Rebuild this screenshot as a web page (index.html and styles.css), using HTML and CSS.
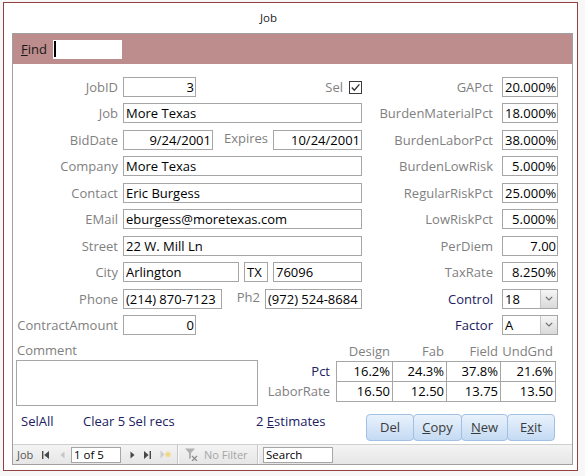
FILE: index.html
```html
<!DOCTYPE html>
<html>
<head>
<meta charset="utf-8">
<link rel="stylesheet" href="styles.css">
</head>
<body>
<div class="frame">
  <div class="title">Job</div>
  <div class="panel">
    <div class="band">
      <span class="find-label"><u>F</u>ind</span>
      <span class="find-box"><span class="caret"></span></span>
    </div>

    <div class="form">
      <div class="lbl">JobID</div>
      <div class="fld">
        <div class="box num w73">3</div>
        <div class="spacer"></div>
        <div class="lbl-in">Sel</div>
        <div class="check">
          <svg width="11" height="11" viewBox="0 0 11 11"><polyline points="1.8,5.6 4.3,8.2 9.4,2.4" fill="none" stroke="#333" stroke-width="1.4"/></svg>
        </div>
      </div>
      <div class="lbl r">GAPct</div>
      <div class="box num">20.000%</div>

      <div class="lbl">Job</div>
      <div class="box">More Texas</div>
      <div class="lbl r">BurdenMaterialPct</div>
      <div class="box num">18.000%</div>

      <div class="lbl">BidDate</div>
      <div class="fld">
        <div class="box num w90">9/24/2001</div>
        <div class="spacer"></div>
        <div class="lbl-in up">Expires</div>
        <div class="box num w89">10/24/2001</div>
      </div>
      <div class="lbl r">BurdenLaborPct</div>
      <div class="box num">38.000%</div>

      <div class="lbl">Company</div>
      <div class="box">More Texas</div>
      <div class="lbl r">BurdenLowRisk</div>
      <div class="box num">5.000%</div>

      <div class="lbl">Contact</div>
      <div class="box">Eric Burgess</div>
      <div class="lbl r">RegularRiskPct</div>
      <div class="box num">25.000%</div>

      <div class="lbl">EMail</div>
      <div class="box">eburgess@moretexas.com</div>
      <div class="lbl r">LowRiskPct</div>
      <div class="box num">5.000%</div>

      <div class="lbl">Street</div>
      <div class="box">22 W. Mill Ln</div>
      <div class="lbl r">PerDiem</div>
      <div class="box num">7.00</div>

      <div class="lbl">City</div>
      <div class="fld">
        <div class="box w116">Arlington</div>
        <div class="box w24 gap5">TX</div>
        <div class="box w89 gap5">76096</div>
      </div>
      <div class="lbl r">TaxRate</div>
      <div class="box num">8.250%</div>

      <div class="lbl">Phone</div>
      <div class="fld">
        <div class="box w99">(214) 870-7123</div>
        <div class="spacer"></div>
        <div class="lbl-in up">Ph2</div>
        <div class="box w97">(972) 524-8684</div>
      </div>
      <div class="lbl r navy">Control</div>
      <div class="box combo">
        <span class="cval">18</span>
        <span class="drop"><svg width="8" height="5" viewBox="0 0 8 5"><polyline points="0.8,0.8 4,4 7.2,0.8" fill="none" stroke="#6a6a6a" stroke-width="1.1"/></svg></span>
      </div>

      <div class="lbl">ContractAmount</div>
      <div class="fld">
        <div class="box num w73">0</div>
      </div>
      <div class="lbl r navy">Factor</div>
      <div class="box combo">
        <span class="cval">A</span>
        <span class="drop"><svg width="8" height="5" viewBox="0 0 8 5"><polyline points="0.8,0.8 4,4 7.2,0.8" fill="none" stroke="#6a6a6a" stroke-width="1.1"/></svg></span>
      </div>
    </div>

    <div class="lower">
      <div class="comment">
        <div class="comment-lbl">Comment</div>
        <div class="comment-box"></div>
      </div>
      <div class="stat-labels">
        <span class="navy">Pct</span>
        <span>LaborRate</span>
      </div>
      <div class="stat-data">
        <div class="stat-heads">
          <span>Design</span><span>Fab</span><span>Field</span><span>UndGnd</span>
        </div>
        <div class="stat-cells">
          <span>16.2%</span><span>24.3%</span><span>37.8%</span><span>21.6%</span>
          <span>16.50</span><span>12.50</span><span>13.75</span><span>13.50</span>
        </div>
      </div>
    </div>

    <div class="actions">
      <span class="link">SelAll</span>
      <span class="link">Clear 5 Sel recs</span>
      <span class="link">2 <u>E</u>stimates</span>
      <div class="buttons">
        <div class="btn b-del">Del</div>
        <div class="btn b-copy"><u>C</u>opy</div>
        <div class="btn b-new"><u>N</u>ew</div>
        <div class="btn b-exit">E<u>x</u>it</div>
      </div>
    </div>

    <div class="nav">
      <span class="nav-job">Job</span>
      <svg class="ic ic-first" width="7" height="8" viewBox="0 0 7 8"><rect x="0" y="0" width="1.4" height="8" fill="#474747"/><polygon points="7,0 2.2,4 7,8" fill="#474747"/></svg>
      <svg class="ic ic-prev" width="5" height="8" viewBox="0 0 5 8"><polygon points="4.5,0.5 0.5,4 4.5,7.5" fill="#c6c6c6"/></svg>
      <span class="rec">1 of 5</span>
      <svg class="ic ic-next" width="5" height="8" viewBox="0 0 5 8"><polygon points="0.5,0.5 4.5,4 0.5,7.5" fill="#474747"/></svg>
      <svg class="ic ic-last" width="7" height="8" viewBox="0 0 7 8"><polygon points="0,0 4.6,4 0,8" fill="#474747"/><rect x="5.6" y="0" width="1.4" height="8" fill="#474747"/></svg>
      <svg class="ic ic-new" width="11" height="9" viewBox="0 0 11 9"><polygon points="0.5,0.5 4.5,4.5 0.5,8.5" fill="#cccccc"/><g stroke="#f0d77a" stroke-width="1.1"><line x1="8" y1="1.5" x2="8" y2="7.5"/><line x1="5" y1="4.5" x2="11" y2="4.5"/><line x1="6" y1="2.5" x2="10" y2="6.5"/><line x1="10" y1="2.5" x2="6" y2="6.5"/></g></svg>
      <span class="sep"></span>
      <svg class="ic ic-filter" width="13" height="13" viewBox="0 0 13 13"><polygon points="0,0.5 10,0.5 6,5 6,10 4,11 4,5" fill="#b0b0b0"/><g stroke="#8c8c8c" stroke-width="1.2"><line x1="7" y1="8" x2="12" y2="13"/><line x1="12" y1="8" x2="7" y2="13"/></g></svg>
      <span class="nofilter">No Filter</span>
      <span class="sep sep2"></span>
      <span class="search">Search</span>
    </div>
  </div>
</div>
</body>
</html>
```

FILE: styles.css
```css
* { box-sizing: border-box; }
html, body { margin: 0; padding: 0; }
body {
  width: 585px;
  height: 476px;
  overflow: hidden;
  background: #f7f7f7;
  font-family: "Open Sans", "Noto Sans", sans-serif;
  font-size: 13px;
  color: #000;
}
.frame {
  margin: 2px 0 0 3px;
  width: 575px;
  height: 469px;
  border: 1px solid #934040;
  background: #fff;
}
.title {
  height: 30px;
  line-height: 30px;
  font-size: 11.5px;
  color: #222;
  padding-left: 256px;
}
.panel {
  margin-left: 8px;
  width: 561px;
  height: 432px;
  border: 1px solid #a0a0a0;
  display: flex;
  flex-direction: column;
}
.band {
  height: 30px;
  flex-shrink: 0;
  background: #bd8c8c;
  display: flex;
  align-items: center;
  padding-left: 8px;
}
.find-label { line-height: 18px; color: #1a1a1a; }
.find-box {
  margin-left: 6px;
  width: 69px;
  height: 19px;
  background: #fff;
  display: flex;
  align-items: center;
  padding-left: 1px;
}
.caret { width: 1.6px; height: 16px; background: #000; }

.form {
  flex-shrink: 0;
  display: grid;
  grid-template-columns: 110px 239px 140px 56px;
  grid-template-rows: repeat(10, 20px);
  row-gap: 6.44px;
  padding-top: 13px;
}
.lbl {
  text-align: right;
  padding-right: 5px;
  line-height: 20px;
  color: #7f7f7f;
  white-space: nowrap;
}
.lbl.r { padding-right: 9px; }
.navy { color: #20205f !important; }
.box {
  height: 20px;
  border: 1px solid #a6a6a6;
  line-height: 18px;
  padding: 0 2px;
  white-space: nowrap;
  overflow: hidden;
  background: #fff;
}
.num { text-align: right; padding-right: 1px; }
.fld { display: flex; align-items: flex-start; }
.spacer { flex: 1; }
.lbl-in { color: #7f7f7f; line-height: 20px; margin-right: 6px; white-space: nowrap; }
.lbl-in.up { line-height: 16px; margin-right: 5px; }
.w73 { width: 73px; }
.w90 { width: 90px; }
.w89 { width: 89px; }
.w116 { width: 116px; }
.w24 { width: 24px; }
.w99 { width: 99px; }
.w97 { width: 97px; }
.gap5 { margin-left: 5px; }
.check {
  align-self: center;
  width: 13px;
  height: 13px;
  border: 1px solid #3a3a3a;
  background: #fff;
  display: flex;
  align-items: center;
  justify-content: center;
}
.check svg { display: block; }
.combo { display: flex; padding: 0; }
.cval { flex: 1; padding-left: 2px; }
.drop {
  width: 17px;
  height: 18px;
  border-left: 1px solid #c4c4c4;
  background: linear-gradient(#f6f6f6, #d9d9d9);
  display: flex;
  align-items: center;
  justify-content: center;
}
.drop svg { display: block; }

.lower {
  flex-shrink: 0;
  height: 71px;
  display: flex;
  padding-top: 6px;
  padding-left: 3px;
}
.comment { width: 242px; display: flex; flex-direction: column; }
.comment-lbl { height: 19px; line-height: 19px; padding-left: 1px; color: #7f7f7f; }
.comment-box { height: 46px; border: 1px solid #a6a6a6; }
.stat-labels {
  width: 72px;
  display: flex;
  flex-direction: column;
  padding-top: 20px;
  text-align: right;
  color: #7f7f7f;
}
.stat-labels span { height: 20px; line-height: 20px; white-space: nowrap; }
.stat-data { margin-left: 6px; }
.stat-heads, .stat-cells {
  display: grid;
  grid-template-columns: 55px 53px 53px 54px;
  column-gap: 1px;
  padding: 0 1px;
}
.stat-heads span {
  height: 20px;
  line-height: 20px;
  text-align: right;
  padding-right: 2px;
  color: #7f7f7f;
  white-space: nowrap;
}
.stat-cells {
  background: #a6a6a6;
  padding: 1px;
  row-gap: 1px;
  grid-template-rows: 19px 19px;
}
.stat-cells span {
  background: #fff;
  line-height: 19px;
  text-align: right;
  padding-right: 2px;
}

.actions {
  flex-shrink: 0;
  display: grid;
  grid-template-columns: 62px 173px 110px auto;
  align-items: start;
  padding-left: 8px;
  margin-top: 6px;
}
.link { color: #20205f; line-height: 18px; white-space: nowrap; }
.buttons { display: flex; margin-top: 2px; }
.btn {
  height: 27px;
  border: 1px solid #a2c0e3;
  border-radius: 4px;
  background: linear-gradient(#e9f2fc, #c4daf3);
  text-align: center;
  line-height: 25px;
  color: #3a3a3a;
}
.btn + .btn { margin-left: -1px; }
.b-del { width: 48px; }
.b-copy { width: 49px; }
.b-new { width: 47px; }
.b-exit { width: 48px; }

.nav {
  margin-top: auto;
  height: 20px;
  flex-shrink: 0;
  border-top: 1px solid #cfcfcf;
  background: linear-gradient(#f4f4f4, #e6e6e6);
  display: flex;
  align-items: center;
  font-size: 11px;
  padding-left: 4px;
}
.nav-job { width: 18px; color: #555; white-space: nowrap; }
.ic { display: block; flex-shrink: 0; }
.ic-first { margin-left: 7px; }
.ic-prev { margin-left: 11px; }
.rec {
  margin-left: 6px;
  width: 50px;
  height: 16px;
  border: 1px solid #a6a6a6;
  background: #fff;
  line-height: 14px;
  padding-left: 2px;
  font-size: 11.5px;
  white-space: nowrap;
}
.ic-next { margin-left: 9px; }
.ic-last { margin-left: 9px; }
.ic-new { margin-left: 9px; }
.sep {
  margin-left: 6px;
  width: 2px;
  height: 19px;
  border-left: 1px solid #c6c6c6;
  border-right: 1px solid #fafafa;
}
.ic-filter { margin-left: 6px; }
.nofilter { margin-left: 6px; width: 44px; color: #a6a6a6; white-space: nowrap; }
.sep2 { margin-left: 9px; }
.search {
  margin-left: 4px;
  width: 70px;
  height: 16px;
  border: 1px solid #a6a6a6;
  background: #fff;
  line-height: 14px;
  padding-left: 2px;
  font-size: 11.5px;
  white-space: nowrap;
}
```
